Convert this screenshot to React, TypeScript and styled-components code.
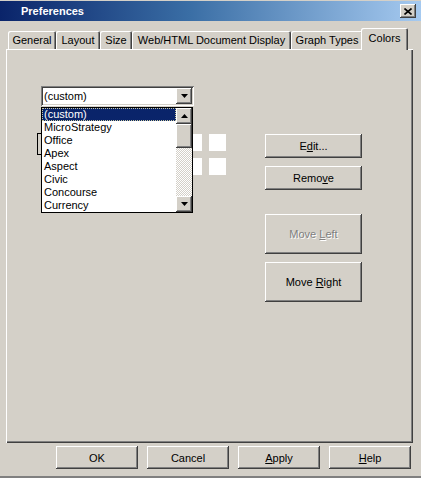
import React from "react";
import styled, { createGlobalStyle, css } from "styled-components";

const Global = createGlobalStyle`
  html, body { margin: 0; padding: 0; background: #d4d0c8; }
  body { font-family: "Liberation Sans", Arial, sans-serif; font-size: 11px; color: #000; }
  * { box-sizing: border-box; }
`;

const raised = css`
  box-shadow: inset -1px -1px #404040, inset 1px 1px #ffffff, inset -2px -2px #808080, inset 2px 2px #d4d0c8;
`;
const sunken = css`
  box-shadow: inset 1px 1px #808080, inset -1px -1px #ffffff, inset 2px 2px #404040, inset -2px -2px #d4d0c8;
`;

const Window = styled.div`
  width: 421px;
  height: 478px;
  background: #d4d0c8;
  padding-top: 1px;
  display: flex;
  flex-direction: column;
  border-bottom: 2px solid #808080;
  font-family: "Liberation Sans", Arial, sans-serif;
  font-size: 11px;
`;

const TitleBar = styled.div`
  height: 20px;
  display: flex;
  align-items: center;
  justify-content: space-between;
  padding: 0 5px 0 21px;
  background: linear-gradient(to right, #0a246a 0%, #3a6ea5 45%, #a6caf0 100%);
  color: #fff;
  font-weight: bold;
  font-size: 11px;
`;

const CloseBtn = styled.div`
  width: 16px;
  height: 14px;
  background: #d4d0c8;
  ${raised};
  display: flex;
  align-items: center;
  justify-content: center;
`;

const TabStrip = styled.div`
  height: 28px;
  display: flex;
  align-items: flex-end;
  padding-left: 8px;
`;

const Tab = styled.div<{ $w: number; $active?: boolean }>`
  position: relative;
  width: ${(p) => p.$w + (p.$active ? 4 : 0)}px;
  height: ${(p) => (p.$active ? 22 : 18)}px;
  margin: ${(p) => (p.$active ? "0 -2px -1px -2px" : "0")};
  z-index: ${(p) => (p.$active ? 2 : 1)};
  background: #d4d0c8;
  border-radius: 2px 2px 0 0;
  box-shadow: inset 1px 1px #ffffff, inset -1px 0 #404040, inset -2px 0 #808080;
  display: flex;
  align-items: center;
  justify-content: center;
  padding-bottom: ${(p) => (p.$active ? 3 : 0)}px;
  white-space: nowrap;
`;

const Panel = styled.div`
  position: relative;
  margin-left: 6px;
  width: 407px;
  height: 394px;
  border-top: 1px solid #ffffff;
  border-left: 1px solid #ffffff;
  box-shadow: inset -1px -1px #404040, inset -2px -2px #808080;
  padding: 36px 0 0 34px;
  display: flex;
  flex-direction: column;
`;

const ComboWrap = styled.div`
  position: relative;
  z-index: 3;
  width: 153px;
  height: 20px;
`;

const ComboField = styled.div`
  width: 153px;
  height: 20px;
  background: #fff;
  ${sunken};
  display: flex;
  align-items: center;
  justify-content: space-between;
  padding: 0 2px 0 3px;
`;

const ArrowBtn = styled.div<{ $h?: number }>`
  width: 16px;
  height: ${(p) => p.$h ?? 16}px;
  background: #d4d0c8;
  ${raised};
  display: flex;
  align-items: center;
  justify-content: center;
  flex: none;
`;

const DropList = styled.div`
  position: absolute;
  top: 21px;
  left: 0;
  width: 152px;
  height: 106px;
  background: #fff;
  border: 1px solid #000;
  display: flex;
`;

const Items = styled.div`
  flex: 1;
  display: flex;
  flex-direction: column;
`;

const Item = styled.div<{ $sel?: boolean }>`
  height: 13px;
  line-height: 13px;
  padding-left: 2px;
  white-space: nowrap;
  background: ${(p) => (p.$sel ? "#0a246a" : "transparent")};
  color: ${(p) => (p.$sel ? "#fff" : "#000")};
  outline: ${(p) => (p.$sel ? "1px dotted #c8c8a0" : "none")};
  outline-offset: -1px;
`;

const ScrollBar = styled.div`
  width: 16px;
  display: flex;
  flex-direction: column;
`;

const Thumb = styled.div`
  height: 24px;
  background: #d4d0c8;
  ${raised};
`;

const Track = styled.div`
  flex: 1;
  background: repeating-conic-gradient(#d4d0c8 0 25%, #ffffff 0 50%) 0 0 / 2px 2px;
`;

const MainRow = styled.div`
  margin-top: 28px;
  display: flex;
  gap: 39px;
  align-items: flex-start;
`;

const SwatchArea = styled.div`
  position: relative;
  display: grid;
  grid-template-columns: repeat(8, 17px);
  grid-auto-rows: 17px;
  gap: 7px;
`;

const Swatch = styled.div<{ $c: string }>`
  background: ${(p) => p.$c};
`;

const SelectRect = styled.div`
  position: absolute;
  left: -4px;
  top: -1px;
  width: 25px;
  height: 22px;
  border: 1px solid #000;
`;

const ButtonCol = styled.div`
  display: flex;
  flex-direction: column;
`;

const Button = styled.div<{ $w: number; $h: number; $gap?: number; $disabled?: boolean }>`
  width: ${(p) => p.$w}px;
  height: ${(p) => p.$h}px;
  margin-top: ${(p) => p.$gap ?? 0}px;
  background: #d4d0c8;
  ${raised};
  display: flex;
  align-items: center;
  justify-content: center;
  font-size: 11px;
  color: ${(p) => (p.$disabled ? "#808080" : "#000")};
  text-shadow: ${(p) => (p.$disabled ? "1px 1px 0 #ffffff" : "none")};
  white-space: nowrap;
  flex: none;
`;

const Footer = styled.div`
  margin-top: 3px;
  display: flex;
  justify-content: flex-end;
  gap: 9px;
  padding-right: 10px;
`;

const Down = () => (
  <svg width="7" height="4" viewBox="0 0 7 4">
    <path d="M0 0h7L3.5 4z" fill="#000" />
  </svg>
);
const Up = () => (
  <svg width="7" height="4" viewBox="0 0 7 4">
    <path d="M0 4h7L3.5 0z" fill="#000" />
  </svg>
);

const tabs: { label: string; w: number; active?: boolean }[] = [
  { label: "General", w: 48 },
  { label: "Layout", w: 44 },
  { label: "Size", w: 32 },
  { label: "Web/HTML Document Display", w: 159 },
  { label: "Graph Types", w: 72 },
  { label: "Colors", w: 43, active: true },
];

const items = ["(custom)", "MicroStrategy", "Office", "Apex", "Aspect", "Civic", "Concourse", "Currency"];

export default function App() {
  return (
    <>
      <Global />
      <Window>
        <TitleBar>
          <span>Preferences</span>
          <CloseBtn>
            <svg width="8" height="7" viewBox="0 0 8 7">
              <path d="M0.5 0.5L7.5 6.5M7.5 0.5L0.5 6.5" stroke="#000" strokeWidth="1.6" />
            </svg>
          </CloseBtn>
        </TitleBar>
        <TabStrip>
          {tabs.map((t) => (
            <Tab key={t.label} $w={t.w} $active={t.active}>
              {t.label}
            </Tab>
          ))}
        </TabStrip>
        <Panel>
          <ComboWrap>
            <ComboField>
              <span>(custom)</span>
              <ArrowBtn>
                <Down />
              </ArrowBtn>
            </ComboField>
            <DropList>
              <Items>
                {items.map((it, i) => (
                  <Item key={it} $sel={i === 0}>
                    {it}
                  </Item>
                ))}
              </Items>
              <ScrollBar>
                <ArrowBtn>
                  <Up />
                </ArrowBtn>
                <Thumb />
                <Track />
                <ArrowBtn>
                  <Down />
                </ArrowBtn>
              </ScrollBar>
            </DropList>
          </ComboWrap>
          <MainRow>
            <SwatchArea>
              {Array.from({ length: 16 }).map((_, i) => (
                <Swatch key={i} $c="#ffffff" />
              ))}
              <SelectRect />
            </SwatchArea>
            <ButtonCol>
              <Button $w={97} $h={24}>
                E<u>d</u>it...
              </Button>
              <Button $w={97} $h={24} $gap={8}>
                Remo<u>v</u>e
              </Button>
              <Button $w={97} $h={40} $gap={24} $disabled>
                Move&nbsp;<u>L</u>eft
              </Button>
              <Button $w={97} $h={40} $gap={8}>
                Move&nbsp;<u>R</u>ight
              </Button>
            </ButtonCol>
          </MainRow>
        </Panel>
        <Footer>
          <Button $w={82} $h={23}>OK</Button>
          <Button $w={82} $h={23}>Cancel</Button>
          <Button $w={82} $h={23}>
            <u>A</u>pply
          </Button>
          <Button $w={82} $h={23}>
            <u>H</u>elp
          </Button>
        </Footer>
      </Window>
    </>
  );
}
